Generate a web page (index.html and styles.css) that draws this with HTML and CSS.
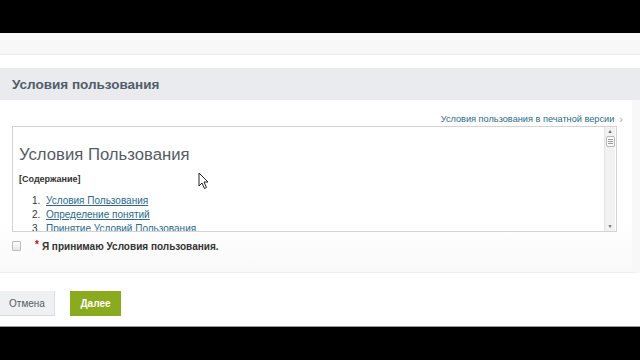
FILE: index.html
```html
<!DOCTYPE html>
<html lang="ru">
<head>
<meta charset="utf-8">
<title>Условия пользования</title>
<link rel="stylesheet" href="styles.css">
</head>
<body>
<div class="topbar"></div>
<div class="strip"></div>
<section class="panel">
  <header class="panel-head"><h2>Условия пользования</h2></header>
  <div class="panel-body">
    <div class="print-row"><a href="#" class="print-link">Условия пользования в печатной версии</a><span class="chev">›</span></div>
    <div class="terms-box">
      <div class="terms-content">
        <h1>Условия Пользования</h1>
        <p class="toc">[Содержание]</p>
        <ol>
          <li><a href="#">Условия Пользования</a></li>
          <li><a href="#">Определение понятий</a></li>
          <li><a href="#">Принятие Условий Пользования</a></li>
        </ol>
      </div>
      <div class="scrollbar">
        <span class="arrow">▲</span>
        <span class="thumb"><i></i><i></i><i></i></span>
        <span class="track"></span>
        <span class="arrow">▼</span>
      </div>
      <svg class="cursor" width="12" height="18" viewBox="0 0 12 18"><path d="M1 1 L1 14 L4 11 L6.5 16.5 L8.5 15.5 L6 10 L10 10 Z" fill="#fff" stroke="#222" stroke-width="1"/></svg>
    </div>
    <label class="accept"><span class="checkbox"></span><span class="req">*</span><span class="accept-text">Я принимаю Условия пользования.</span></label>
  </div>
</section>
<div class="actions">
  <button class="btn btn-cancel">Отмена</button>
  <button class="btn btn-next">Далее</button>
</div>
<div class="bottombar"></div>
</body>
</html>
```

FILE: styles.css
```css
* { box-sizing: border-box; }
html, body { margin: 0; padding: 0; }
body {
  width: 640px;
  height: 360px;
  overflow: hidden;
  background: #fff;
  font-family: "Liberation Sans", Arial, sans-serif;
  color: #333;
}
.topbar { height: 33px; background: #000; }
.strip {
  height: 22px;
  background: #f8f8f8;
  border-bottom: 1px solid #ececec;
}
.panel { margin-top: 13px; }
.panel-head {
  height: 32px;
  background: #e9ebee;
  display: flex;
  align-items: center;
  padding-left: 12px;
}
.panel-head h2 {
  margin: 0;
  font-size: 13.5px;
  font-weight: bold;
  color: #535c69;
}
.panel-body {
  height: 173px;
  padding: 12px 15px 0 12px;
  background: linear-gradient(#fff 70%, #f9f9f9);
  border-bottom: 1px solid #efefef;
  border-right: 8px solid #f8f8f8;
}
.print-row {
  display: flex;
  justify-content: flex-end;
  align-items: center;
  height: 14px;
  font-size: 9.2px;
}
.print-link { color: #2b6a8e; text-decoration: none; }
.chev { color: #aaa; margin-left: 5px; font-size: 11px; margin-right: -6px; }
.terms-box {
  position: relative;
  height: 106px;
  border: 1px solid #d3d3d3;
  display: flex;
  overflow: hidden;
  background: #fff;
}
.terms-content {
  flex: 1;
  padding: 18px 0 0 6px;
}
.terms-content h1 {
  margin: 0;
  font-size: 16.7px;
  font-weight: normal;
  color: #555c66;
  line-height: 20px;
}
.toc {
  margin: 9px 0 0;
  font-size: 9px;
  font-weight: bold;
  color: #333;
}
.terms-content ol {
  margin: 10px 0 0;
  padding-left: 24px;
  font-size: 10px;
  line-height: 14px;
  color: #333;
}
.terms-content li { padding-left: 3px; }
.terms-content a { color: #2b6a8e; }
.scrollbar {
  width: 11px;
  margin: 0 1px 0 0;
  background: #f1f1f1;
  border-left: 1px solid #e4e4e4;
  display: flex;
  flex-direction: column;
  align-items: center;
}
.arrow { font-size: 5px; color: #666; line-height: 9px; }
.thumb {
  width: 9px;
  height: 11px;
  border: 1px solid #b8b8b8;
  border-radius: 2px;
  background: #fafafa;
  display: flex;
  flex-direction: column;
  justify-content: center;
  align-items: center;
  gap: 1px;
}
.thumb i { display: block; width: 5px; height: 1px; background: #999; }
.track { flex: 1; }
.cursor { position: absolute; left: 185px; top: 45px; }
.accept {
  display: flex;
  align-items: center;
  margin-top: 9px;
  height: 10px;
  font-size: 10px;
  font-weight: bold;
  color: #333;
}
.checkbox {
  width: 9px;
  height: 10px;
  border: 1px solid #bbb;
  background: linear-gradient(#fff, #e6e6e6);
  border-radius: 1px;
}
.req { color: #d0021b; margin-left: 14px; margin-right: 3px; font-size: 10px; position: relative; top: -2px; }
.actions {
  display: flex;
  gap: 15px;
  padding-top: 18px;
  height: 53px;
}
.btn {
  height: 25px;
  border: none;
  font-family: "Liberation Sans", Arial, sans-serif;
  font-size: 10px;
  padding: 0;
}
.btn-cancel {
  width: 55px;
  background: #eef0f2;
  color: #535c69;
  border-bottom: 1px solid #d5d8dc;
  border-right: 1px solid #dde0e3;
}
.btn-next {
  width: 51px;
  background: #8aab1e;
  color: #fff;
  font-weight: bold;
}
.bottombar {
  height: 34px;
  background: #000;
  border-top: 1px solid #999;
}
```
